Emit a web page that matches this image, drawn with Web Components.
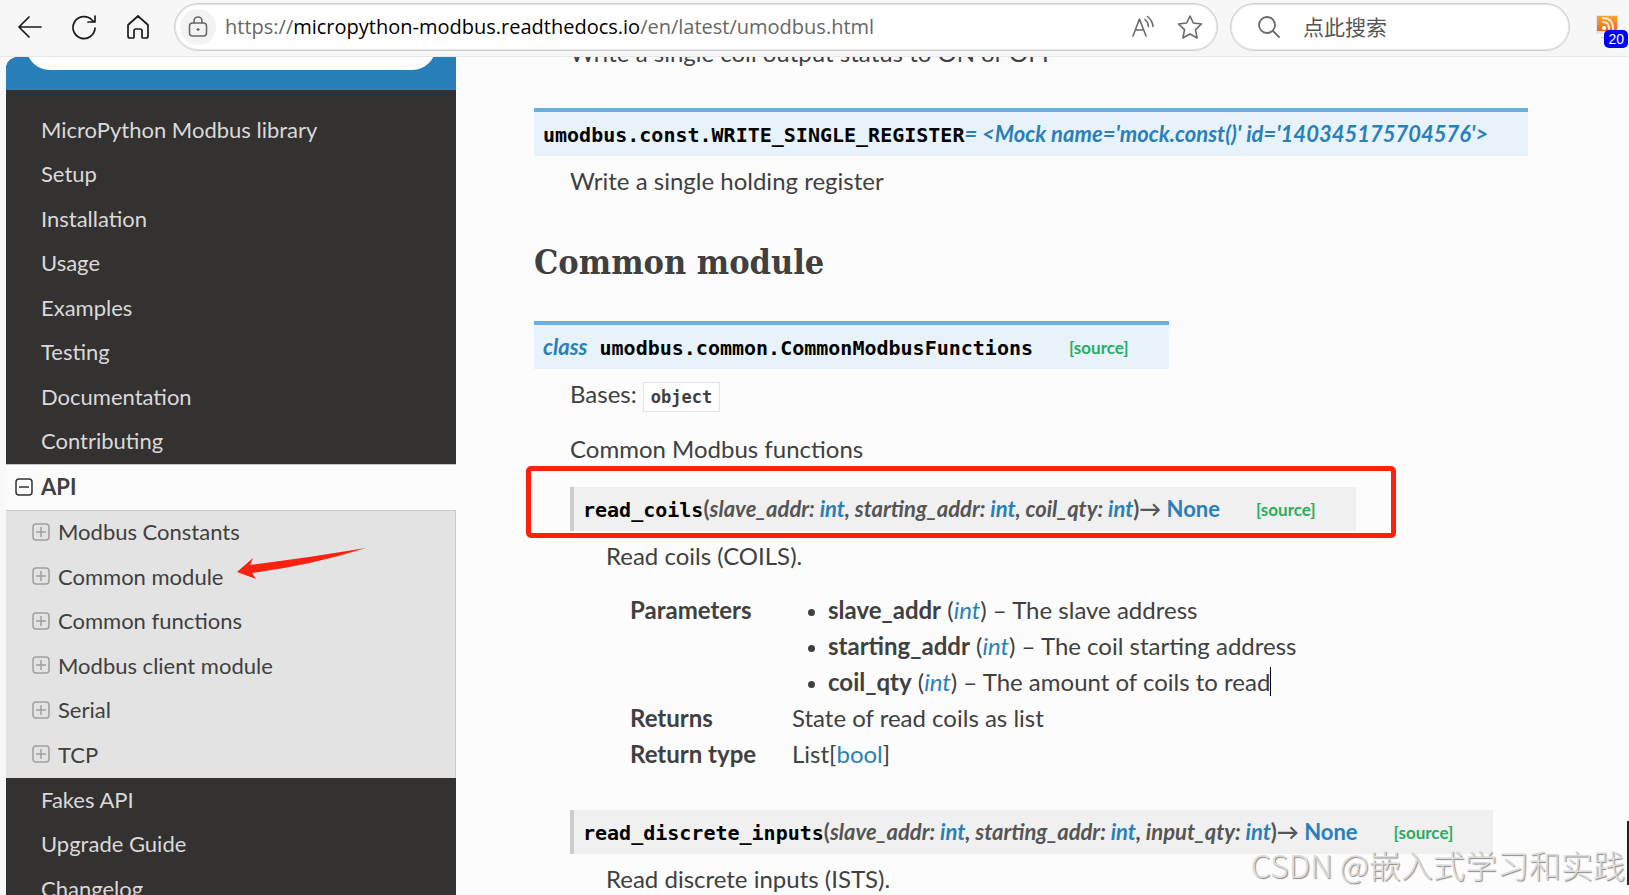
<!DOCTYPE html>
<html lang="en">
<head>
<meta charset="utf-8">
<title>umodbus - MicroPython Modbus documentation</title>
<style>
  body {
    margin: 0;
    height: 100vh;
    overflow: hidden;
    background: #f8f8f8;
    color: #404040;
    font-family: Lato, "Noto Sans CJK SC", sans-serif;
  }
</style>
</head>
<body>
<docs-app></docs-app>

<script>
// Shared base: every element renders its markup into an open shadow root
class BaseElement extends HTMLElement {
  constructor() {
    super();
    this.attachShadow({ mode: 'open' });
  }

  connectedCallback() {
    this.shadowRoot.innerHTML = this.render();
  }
}

class BrowserBar extends BaseElement {
  render() {
    return `
      <style>
        :host {
          display: flex;
          align-items: center;
          box-sizing: border-box;
          height: 57px;
          padding: 3px 0 6px 14px;
          background: #f7f7f7;
          border-bottom: 1px solid #e8e8e8;
          font-family: "Open Sans", "Noto Sans CJK SC", sans-serif;
          font-size: 20px;
        }
        button {
          display: flex;
          padding: 0;
          border: 0;
          background: none;
          flex: none;
        }
        svg { display: block; fill: none; stroke: #1a1a1a; stroke-width: 1.7; stroke-linecap: round; stroke-linejoin: round; }
        .nav { display: flex; gap: 22px; margin-right: 20px; }
        .field {
          display: flex;
          align-items: center;
          box-sizing: border-box;
          height: 48px;
          border: 1px solid #cfcfcf;
          border-radius: 24px;
          background: #fff;
          box-shadow: 0 0 0 1px #e4e4e4 inset;
        }
        .field svg { stroke: #6a6a6a; }
        .address { flex: 1; padding: 0 13px 0 5px; gap: 9px; }
        .lock { width: 36px; height: 36px; border-radius: 50%; background: #f3f3f3; align-items: center; justify-content: center; }
        .url { flex: 1; color: #666; text-decoration: none; white-space: nowrap; }
        .url b { font-weight: 400; color: #000; }
        .tools { display: flex; gap: 19px; }
        .search { width: 340px; margin-left: 12px; padding: 0 25px; gap: 21px; }
        input { flex: 1; min-width: 0; padding: 0; border: 0; outline: 0; background: none; font: inherit; font-size: 21px; }
        input::placeholder { color: #555; opacity: 1; }
        .feed { position: relative; margin-left: 26px; width: 33px; height: 42px; }
        .feed svg { stroke: none; }
        .badge {
          position: absolute;
          right: 1px;
          bottom: 0;
          padding: 0 4px;
          border-radius: 5px;
          background: #0000fe;
          color: #fff;
          font-size: 14px;
          line-height: 18px;
        }
      </style>
      <div class="nav">
        <button aria-label="Back"><svg width="32" height="32" viewBox="0 0 32 32"><path d="M27 16H5M15 6 5 16l10 10"/></svg></button>
        <button aria-label="Refresh"><svg width="32" height="32" viewBox="0 0 32 32"><path d="M27 17A11 11 0 1 1 24 9l2 2M27 5v6h-7"/></svg></button>
        <button aria-label="Home"><svg width="32" height="32" viewBox="0 0 32 32"><path d="M6 14 16 5l10 9v11a2 2 0 0 1-2 2h-3a1 1 0 0 1-1-1v-6a2 2 0 0 0-2-2h-4a2 2 0 0 0-2 2v6a1 1 0 0 1-1 1H8a2 2 0 0 1-2-2z"/></svg></button>
      </div>
      <div class="field address">
        <button class="lock" aria-label="Site information"><svg width="24" height="24" viewBox="0 0 24 24"><g stroke-width="1.6"><rect x="3.5" y="8" width="17" height="13" rx="3"/><path d="M8 8V6a4 4 0 0 1 8 0v2"/></g><circle cx="12" cy="14.5" r="1" fill="#6a6a6a" stroke-width="1"/></svg></button>
        <a class="url" href="#">https://<b>micropython-modbus.readthedocs.io</b>/en/latest/umodbus.html</a>
        <div class="tools">
          <button aria-label="Read aloud"><svg width="28" height="28" viewBox="0 0 28 28"><path stroke-width="1.6" d="M4 23 10.5 6 17 23M6.5 17h8M16 6.500q3 2.500 3.500 7M18.500 3.500q5 4 5.500 10"/></svg></button>
          <button aria-label="Add to favorites"><svg width="28" height="28" viewBox="0 0 28 28"><path stroke-width="1.6" d="m14 3 3.300 7 8.200 1-6 5.700 1.600 8.300-7.100-4-7.100 4 1.600-8.300-6-5.700 8.200-1z"/></svg></button>
        </div>
      </div>
      <div class="field search">
        <svg width="26" height="26" viewBox="0 0 26 26"><path stroke-width="1.8" d="M19 11a8 8 0 1 1-16 0 8 8 0 0 1 16 0zM17 17l6 6"/></svg>
        <input type="text" aria-label="Search" placeholder="点此搜索">
      </div>
      <button class="feed" aria-label="Feeds">
        <svg width="33" height="42" viewBox="0 0 33 42">
          <defs><linearGradient id="screen" x2="0" y2="1"><stop stop-color="#f7a23a"/><stop offset="1" stop-color="#f06a10"/></linearGradient></defs>
          <path fill="#e3e8ee" d="M0 9h22v19H0z"/>
          <path fill="url(#screen)" d="M1 10h20v15H1z"/>
          <path fill="#c9ced4" d="M5 31h7v1H5z"/>
          <circle cx="8" cy="22" r="2" fill="#fff"/>
          <path fill="none" stroke="#ffe9cf" stroke-width="2" d="M7 16q6 0 6 7M7 12q10 0 10 11"/>
        </svg>
        <span class="badge">20</span>
      </button>
    `;
  }
}

class NavItem extends BaseElement {
  render() {
    const level = this.getAttribute('level') || '1';
    const current = this.hasAttribute('current');
    const sign = current ? 'M4 9h10' : 'M4 9h10M9 4v10';
    const toggle = current || level === '2'
      ? `<button aria-label="Toggle section"><svg width="18" height="18" viewBox="0 0 18 18"><rect x="1" y="1" width="16" height="16" rx="3"/><path d="${sign}"/></svg></button>`
      : '';
    return `
      <style>
        :host { display: flex; align-items: center; box-sizing: border-box; height: 44px; padding: 0 0 2px 35px; color: #d9d9d9; font-size: 22px; }
        :host(:nth-of-type(even)) { height: 45px; }
        :host([level="2"]) { padding: 0 0 3px 26px; color: #404040; }
        :host([current]) { height: 46px; padding-left: 9px; border-top: 1px solid #c9c9c9; background: #fcfcfc; color: #404040; font-weight: 700; }
        a { color: inherit; text-decoration: none; }
        button { display: flex; margin: 0 8px 0 0; padding: 0; border: 0; background: none; color: #a0a0a0; }
        :host([current]) button { color: #333; }
        svg { fill: none; stroke: currentColor; stroke-width: 1.5; }
      </style>
      ${toggle}<a href="#"><slot></slot></a>
    `;
  }
}

class SideNav extends BaseElement {
  render() {
    return `
      <style>
        :host { display: block; position: relative; overflow: hidden; background: #343131; border-radius: 12px 0 0 0; }
        .top { display: flow-root; height: 33px; padding: 0 20px; background: #2980b9; }
        input { display: block; box-sizing: border-box; width: 100%; height: 48px; margin-top: -35px; border: 0; border-radius: 24px; background: #fff; }
        .first { padding-top: 18px; }
        .sub { background: #e3e3e3; border: solid #c9c9c9; border-width: 1px 1px 0 0; }
        .arrow { position: absolute; left: 231px; top: 490px; }
      </style>
      <div class="top"><input type="text" aria-label="Search docs"></div>
      <nav>
        <div class="first">
          <nav-item>MicroPython Modbus library</nav-item>
          <nav-item>Setup</nav-item>
          <nav-item>Installation</nav-item>
          <nav-item>Usage</nav-item>
          <nav-item>Examples</nav-item>
          <nav-item>Testing</nav-item>
          <nav-item>Documentation</nav-item>
          <nav-item>Contributing</nav-item>
          <nav-item current>API</nav-item>
        </div>
        <div class="sub">
          <nav-item level="2">Modbus Constants</nav-item>
          <nav-item level="2">Common module</nav-item>
          <nav-item level="2">Common functions</nav-item>
          <nav-item level="2">Modbus client module</nav-item>
          <nav-item level="2">Serial</nav-item>
          <nav-item level="2">TCP</nav-item>
        </div>
        <div>
          <nav-item>Fakes API</nav-item>
          <nav-item>Upgrade Guide</nav-item>
          <nav-item>Changelog</nav-item>
        </div>
      </nav>
      <svg class="arrow" width="130" height="34" viewBox="0 0 130 34"><path fill="#ff2010" d="M0 25 16 11 13 18Q70 11 129 1 75 18 15 26L19 32Z"/></svg>
    `;
  }
}

// Signature line of a class, constant or method
class ApiSignature extends BaseElement {
  render() {
    const source = this.hasAttribute('source') ? '<a href="#">[source]</a>' : '';
    return `
      <style>
        :host {
          display: flex;
          align-items: center;
          position: relative;
          box-sizing: border-box;
          width: fit-content;
          height: 48px;
          padding: 0 40px 0 9px;
          border-top: 4px solid #6ab0de;
          background: #e7f2fa;
          color: #2980b9;
          font-size: 22px;
          font-weight: 700;
          white-space: nowrap;
        }
        :host([method]) { height: 44px; border-top: 0; border-left: 4px solid #ccc; background: #f0f0f0; color: #555; }
        :host([marked])::after {
          content: "";
          position: absolute;
          inset: -21px -40px -7px -48px;
          border: 5px solid #ff2010;
          border-radius: 5px;
        }
        a { margin: 2px 0 0 36px; color: #27ae60; font-size: 17px; text-decoration: none; }
      </style>
      <span><slot></slot></span>${source}
    `;
  }
}

class FieldList extends BaseElement {
  render() {
    return `
      <style>
        :host { display: block; margin: 18px 0 38px 24px; }
        dl { display: grid; grid-template-columns: 162px 1fr; margin: 0; }
        dt { font-weight: 700; }
        dd { margin: 0; }
        ul { margin: 0; padding-left: 36px; }
        li::marker { font-size: 20px; }
        a { color: #2980b9; text-decoration: none; }
        .caret { border-right: 1px solid #000; }
      </style>
      <dl>
        <dt>Parameters</dt>
        <dd><ul>
          <li><b>slave_addr</b> (<a href="#"><i>int</i></a>) – The slave address</li>
          <li><b>starting_addr</b> (<a href="#"><i>int</i></a>) – The coil starting address</li>
          <li><b>coil_qty</b> (<a href="#"><i>int</i></a>) – The amount of coils to read<span class="caret"></span></li>
        </ul></dd>
        <dt>Returns</dt>
        <dd>State of read coils as list</dd>
        <dt>Return type</dt>
        <dd>List[<a href="#">bool</a>]</dd>
      </dl>
    `;
  }
}

class DocsContent extends BaseElement {
  render() {
    return `
      <style>
        :host { display: block; overflow: hidden; background: #fcfcfc; font-size: 24px; line-height: 36px; }
        /* the page is scrolled, so its first line is cut by the toolbar */
        article { display: flow-root; margin: -29px 78px 0; }
        p { margin: 0 0 18px; }
        h2 { margin: 42px 0 38px; font-family: "DejaVu Serif Condensed", "DejaVu Serif", serif; font-size: 34px; line-height: 42px; }
        .body { margin: 7px 0 0 36px; }
        .last { margin-bottom: 37px; }
        .lead { margin-bottom: 20px; }
        code { color: #000; font-family: "DejaVu Sans Mono", monospace; font-size: 20px; }
        .bases { margin-bottom: 19px; }
        .box { display: inline-block; padding: 0 7px; border: 1px solid #e1e4e5; background: #fff; color: #404040; font-size: 17px; line-height: 28px; font-weight: 700; }
        api-signature a { color: #2980b9; text-decoration: none; }
        i.gap { margin-right: 12px; }
      </style>
      <article>
        <div class="body"><p class="last">Write a single coil output status to ON or OFF</p></div>
        <api-signature><code>umodbus.const.WRITE_SINGLE_REGISTER</code><i>= &lt;Mock name='mock.const()' id='140345175704576'&gt;</i></api-signature>
        <div class="body"><p>Write a single holding register</p></div>
        <h2>Common module</h2>
        <api-signature source><i class="gap">class</i><code>umodbus.common.CommonModbusFunctions</code></api-signature>
        <div class="body">
          <p class="bases">Bases: <code class="box">object</code></p>
          <p class="lead">Common Modbus functions</p>
          <api-signature method source marked><code>read_coils</code>(<i>slave_addr: <a href="#">int</a>, starting_addr: <a href="#">int</a>, coil_qty: <a href="#">int</a></i>)→ <a href="#">None</a></api-signature>
          <div class="body">
            <p>Read coils (COILS).</p>
            <field-list></field-list>
          </div>
          <api-signature method source><code>read_discrete_inputs</code>(<i>slave_addr: <a href="#">int</a>, starting_addr: <a href="#">int</a>, input_qty: <a href="#">int</a></i>)→ <a href="#">None</a></api-signature>
          <div class="body"><p>Read discrete inputs (ISTS).</p></div>
        </div>
      </article>
    `;
  }
}

class DocsApp extends BaseElement {
  render() {
    return `
      <style>
        :host { display: flex; flex-direction: column; position: relative; height: 100vh; }
        main { display: grid; grid-template-columns: 450px 1fr; flex: 1; min-height: 0; padding-left: 6px; }
        .watermark {
          position: absolute;
          right: 4px;
          bottom: 13px;
          color: #dcdcdc;
          font: 300 32px/36px "Noto Sans CJK SC", sans-serif;
          text-shadow: 1px 1px 1px #888;
        }
        .thumb { position: absolute; right: 0; bottom: 10px; width: 2px; height: 64px; background: #222; }
      </style>
      <browser-bar></browser-bar>
      <main>
        <side-nav></side-nav>
        <docs-content></docs-content>
      </main>
      <div class="watermark">CSDN @嵌入式学习和实践</div>
      <div class="thumb"></div>
    `;
  }
}

customElements.define('browser-bar', BrowserBar);
customElements.define('nav-item', NavItem);
customElements.define('side-nav', SideNav);
customElements.define('api-signature', ApiSignature);
customElements.define('field-list', FieldList);
customElements.define('docs-content', DocsContent);
customElements.define('docs-app', DocsApp);
</script>
</body>
</html>
